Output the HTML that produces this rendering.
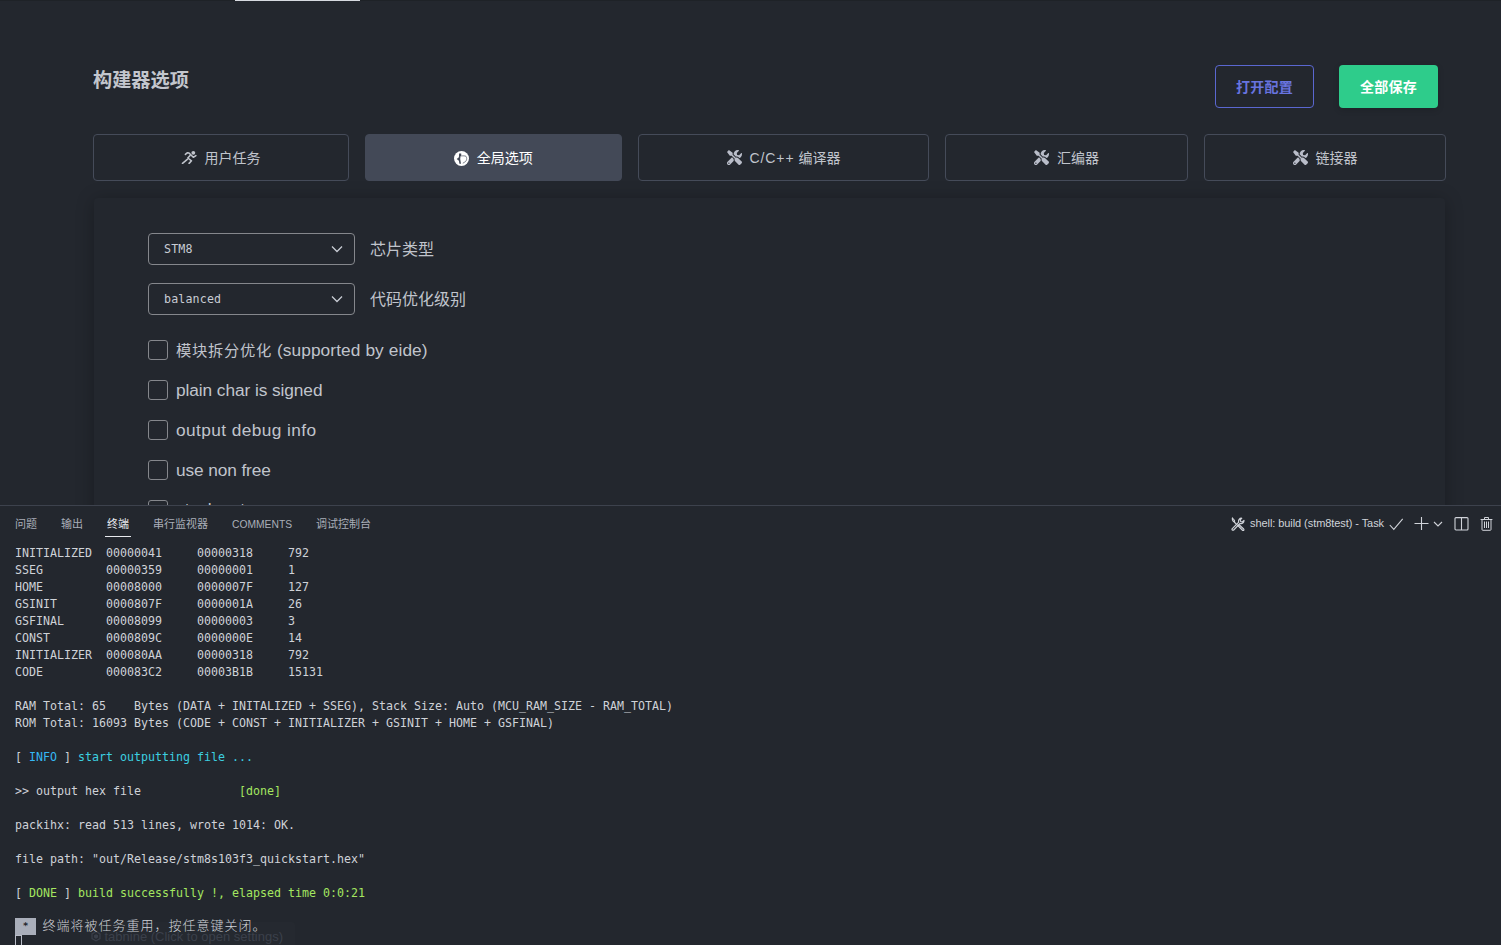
<!DOCTYPE html>
<html lang="zh-CN">
<head>
<meta charset="utf-8">
<title>构建器选项</title>
<style>
*{box-sizing:border-box;margin:0;padding:0}
html,body{width:1501px;height:945px;overflow:hidden;background:#23272e}
body{position:relative;font-family:"Liberation Sans","Noto Sans CJK SC",sans-serif;color:#c0c4cc}
.abs{position:absolute}
#topline{left:0;top:0;width:1501px;height:1px;background:#1e2227}
#topmark{left:235px;top:0;width:125px;height:1px;background:#d7dae0}
#editor{left:0;top:0;width:1501px;height:505px;overflow:hidden}
h1{position:absolute;left:93px;top:68px;font-size:19.2px;line-height:26px;font-weight:700;color:#c3c6cd;white-space:nowrap}
.btn{position:absolute;top:65px;height:43px;width:99px;border-radius:4px;font-size:14px;letter-spacing:.3px;font-weight:700;line-height:43px;text-align:center;white-space:nowrap}
#b-open{left:1215px;border:1px solid #5a67d0;color:#6874e0}
#b-save{left:1339px;background:#2ecc8b;color:#fff;line-height:45px;box-shadow:0 2px 6px rgba(0,0,0,.15)}
.tab{position:absolute;top:134px;height:47px;border:1px solid #454b59;border-radius:4px;font-size:14px;line-height:45px;color:#c0c4cc;white-space:nowrap;display:flex;align-items:center;justify-content:center}
.tab.on{background:#434957;border-color:#434957;color:#fff}
.tab svg{margin-right:8px;flex:none}
.tt{position:relative;top:1px}
#card{left:94px;top:198px;width:1351px;height:330px;background:#23272e;border-radius:4px;box-shadow:0 2px 18px 0 rgba(0,0,0,.27)}
.sel{position:absolute;left:148px;width:207px;height:32px;border:1px solid #85878c;border-radius:4px;font-family:"DejaVu Sans Mono","Liberation Mono",monospace;font-size:11.63px;letter-spacing:.15px;line-height:30px;padding-left:15px;color:#c8ccd4}
.sel svg{position:absolute;right:11px;top:8.500px}
.lab{position:absolute;left:370px;font-size:16px;line-height:34px;color:#c0c4cc;white-space:nowrap}
.cb{position:absolute;left:148px;width:20px;height:20px;border:1px solid #85878c;border-radius:3px}
.cl{position:absolute;left:176px;font-size:17.3px;line-height:24px;color:#c0c4cc;white-space:nowrap}
#panel{left:0;top:505px;width:1501px;height:440px;background:#23272e;border-top:1px solid #3d424d;overflow:hidden}
.pt{position:absolute;top:11px;font-size:11px;line-height:14px;color:#a9aeb8;white-space:nowrap}
.pt.on{color:#e8eaee}
#uline{left:105px;top:30px;width:26px;height:1px;background:#e8eaee}
#term{left:15px;top:39px;font-family:"DejaVu Sans Mono","Liberation Mono","Noto Sans CJK SC",monospace;font-size:11.63px;line-height:17px;color:#cfd2d8;white-space:pre}
.c{color:#3ccfe0}.b{color:#35b8f5}.g{color:#a4e660}
#right{right:0;top:8px;height:20px;font-size:11px;color:#d0d3d9}
#star{left:15px;top:412px;width:21px;height:17px;background:#a9aeba;color:#23272e;font-family:"DejaVu Sans Mono","Liberation Mono",monospace;font-size:9.500px;font-weight:700;line-height:16px;white-space:pre;text-align:center}
#msg{z-index:2;font-weight:300;left:42.500px;top:409.700px;font-family:"Noto Sans CJK SC","Liberation Sans",sans-serif;font-size:13px;letter-spacing:1px;line-height:17px;color:#cfd2d8;white-space:nowrap}
#cursor{left:15px;top:429px;width:7px;height:17px;border:1px solid #b9bdc8}
#tabnine{left:80px;top:416px;width:215px;height:30px;background:#252930;border-radius:3px 3px 0 0;color:#3b404b;font-size:13px;line-height:15px;padding:6.500px 0 0 10.500px;white-space:nowrap;z-index:0}
#tabnine svg{vertical-align:-1px;margin-right:4px}
#tb{left:0;top:0;width:1501px;height:34px}
#tbt{left:1250px;top:10px;letter-spacing:-.07px;font-size:11px;line-height:14px;color:#d0d3d9;white-space:nowrap}
</style>
</head>
<body>
<div id="editor" class="abs">
  <div id="topline" class="abs"></div>
  <div id="topmark" class="abs"></div>
  <h1>构建器选项</h1>
  <div id="b-open" class="btn">打开配置</div>
  <div id="b-save" class="btn">全部保存</div>

  <div class="tab" style="left:93px;width:256px"><svg width="16" height="14" viewBox="0 0 16 14" style="margin-right:7px;position:relative;left:-1px;top:-.7px"><g fill="none" stroke="#c0c4cc" stroke-width="1.55" stroke-linecap="round" stroke-linejoin="round"><circle cx="12.3" cy="2.8" r="1.9" fill="#c0c4cc" stroke="none"/><path d="M4.4 4.400L6.500 2.700L8 3L12.300 7.300L14.900 5.600"/><path d="M9.100 5.400L6.800 8L10.500 10.800L8.100 13.400"/><path d="M6.300 9.300L1.500 13.400"/></g></svg><span class="tt">用户任务</span></div>
  <div class="tab on" style="left:365px;width:257px"><svg width="15" height="15" viewBox="0 0 15 15" style="margin-right:7.5px;position:relative;top:.5px"><circle cx="7.5" cy="7.5" r="7.5" fill="#fff"/><path d="M5.100 2.600L7.200 2.600L7.300 4.600L6.500 5.600L6.200 8L7 12.700L5.400 12.700L4.900 9.800L2.700 7.900L4.900 6.200z" fill="#434957"/><path d="M7.200 5C9 4.700 11 4.800 12 5.300C12.900 6.500 12.900 8.300 12.200 9.600C11.400 10.900 10 11.800 8.800 12.200" fill="none" stroke="#434957" stroke-width=".8" stroke-opacity=".85"/></svg><span class="tt">全局选项</span></div>
  <div class="tab" style="left:638px;width:291px"><svg class="tool" width="15" height="15" viewBox="0 0 512 512"><path fill="#b9bdc9" d="M501.1 395.7L384 278.6c-23.1-23.1-57.6-27.6-85.4-13.9L192 158.1V96L64 0 0 64l96 128h62.1l106.6 106.6c-13.6 27.800-9.200 62.300 13.900 85.400l117.100 117.100c14.600 14.600 38.200 14.600 52.700 0l52.700-52.700c14.500-14.600 14.500-38.200 0-52.700zM331.700 225c28.300 0 54.900 11 74.900 31l19.400 19.400c15.800-6.900 30.800-16.500 43.800-29.500 37.100-37.100 49.700-89.300 37.900-136.700-2.200-9-13.500-12.100-20.100-5.500l-74.400 74.400-67.900-11.300L334 98.900l74.400-74.400c6.600-6.600 3.400-17.900-5.700-20.200-47.400-11.700-99.600.9-136.600 37.900-28.500 28.500-41.900 66.100-41.200 103.600l82.100 82.100c8.100-1.900 16.500-2.900 24.700-2.900zm-103.900 82l-56.700-56.700L18.700 402.800c-25 25-25 65.500 0 90.500s65.500 25 90.500 0l123.600-123.600c-7.600-19.900-9.900-41.600-5-62.700zM64 472c-13.200 0-24-10.800-24-24 0-13.300 10.700-24 24-24s24 10.700 24 24c0 13.200-10.700 24-24 24z"/></svg><span class="tt"><span style="letter-spacing:.9px">C/C++</span> 编译器</span></div>
  <div class="tab" style="left:945px;width:243px"><svg class="tool" width="15" height="15" viewBox="0 0 512 512"><path fill="#b9bdc9" d="M501.1 395.7L384 278.6c-23.1-23.1-57.6-27.6-85.4-13.9L192 158.1V96L64 0 0 64l96 128h62.1l106.6 106.6c-13.6 27.800-9.200 62.300 13.900 85.400l117.100 117.100c14.600 14.600 38.200 14.600 52.700 0l52.700-52.700c14.500-14.600 14.500-38.200 0-52.700zM331.700 225c28.300 0 54.900 11 74.900 31l19.400 19.400c15.800-6.900 30.800-16.500 43.800-29.500 37.100-37.100 49.700-89.300 37.900-136.700-2.200-9-13.500-12.100-20.100-5.500l-74.400 74.400-67.900-11.300L334 98.900l74.400-74.400c6.600-6.600 3.400-17.900-5.700-20.200-47.400-11.700-99.600.9-136.600 37.900-28.500 28.500-41.900 66.100-41.200 103.600l82.100 82.100c8.100-1.900 16.500-2.900 24.700-2.900zm-103.900 82l-56.700-56.700L18.700 402.800c-25 25-25 65.500 0 90.500s65.500 25 90.500 0l123.600-123.600c-7.600-19.900-9.900-41.600-5-62.700zM64 472c-13.200 0-24-10.800-24-24 0-13.300 10.700-24 24-24s24 10.700 24 24c0 13.200-10.700 24-24 24z"/></svg><span class="tt">汇编器</span></div>
  <div class="tab" style="left:1204px;width:242px"><svg class="tool" width="15" height="15" viewBox="0 0 512 512"><path fill="#b9bdc9" d="M501.1 395.7L384 278.6c-23.1-23.1-57.6-27.6-85.4-13.9L192 158.1V96L64 0 0 64l96 128h62.1l106.6 106.6c-13.6 27.800-9.200 62.300 13.900 85.400l117.100 117.100c14.600 14.600 38.200 14.600 52.700 0l52.700-52.700c14.500-14.600 14.500-38.200 0-52.700zM331.700 225c28.300 0 54.900 11 74.900 31l19.400 19.400c15.800-6.900 30.800-16.500 43.800-29.500 37.100-37.100 49.700-89.300 37.900-136.700-2.200-9-13.500-12.100-20.100-5.500l-74.400 74.400-67.900-11.300L334 98.900l74.400-74.400c6.600-6.600 3.400-17.900-5.700-20.200-47.400-11.700-99.600.9-136.600 37.900-28.500 28.500-41.900 66.100-41.200 103.600l82.100 82.100c8.100-1.900 16.500-2.900 24.700-2.900zm-103.900 82l-56.700-56.700L18.700 402.800c-25 25-25 65.500 0 90.500s65.500 25 90.500 0l123.600-123.600c-7.600-19.900-9.900-41.600-5-62.700zM64 472c-13.200 0-24-10.800-24-24 0-13.300 10.700-24 24-24s24 10.700 24 24c0 13.200-10.700 24-24 24z"/></svg><span class="tt">链接器</span></div>

  <div id="card" class="abs"></div>

  <div class="sel" style="top:233px">STM8<svg width="12" height="12" viewBox="0 0 12 12"><path d="M1 3.500l5 5 5-5" fill="none" stroke="#c8ccd4" stroke-width="1.300"/></svg></div>
  <div class="lab" style="top:233px">芯片类型</div>
  <div class="sel" style="top:283px">balanced<svg width="12" height="12" viewBox="0 0 12 12"><path d="M1 3.500l5 5 5-5" fill="none" stroke="#c8ccd4" stroke-width="1.300"/></svg></div>
  <div class="lab" style="top:283px">代码优化级别</div>

  <div class="cb" style="top:340px"></div><div class="cl" style="top:338px"><span style="font-size:15.300px;letter-spacing:.7px;position:relative;top:.3px">模块拆分优化</span><span style="letter-spacing:.1px"> (supported by eide)</span></div>
  <div class="cb" style="top:380px"></div><div class="cl" style="top:378px;letter-spacing:-.075px">plain char is signed</div>
  <div class="cb" style="top:420px"></div><div class="cl" style="top:418px;letter-spacing:.41px">output debug info</div>
  <div class="cb" style="top:460px"></div><div class="cl" style="top:458px;letter-spacing:-.11px">use non free</div>
  <div class="cb" style="top:500px"></div><div class="cl" style="top:497px">stack auto</div>
</div>



<div id="panel" class="abs">
  <div class="pt" style="left:15px">问题</div>
  <div class="pt" style="left:61px">输出</div>
  <div class="pt on" style="left:107px">终端</div>
  <div class="pt" style="left:153px">串行监视器</div>
  <div class="pt" style="left:232px;font-size:10.3px;top:11.500px">COMMENTS</div>
  <div class="pt" style="left:316px">调试控制台</div>
  <div id="uline" class="abs"></div>
  <div id="star" class="abs"> * </div>
  <div id="msg" class="abs">终端将被任务重用，按任意键关闭。</div>
  <div id="cursor" class="abs"></div>
  <div id="tabnine" class="abs"><svg width="10" height="11" viewBox="0 0 10 11"><path d="M5 .6l4 2.300v4.700l-4 2.300-4-2.300V2.900z" fill="none" stroke="#3a3f4a" stroke-width="1.200"/><path d="M5 3.200l2 1.100v2.300L5 7.800 3 6.600V4.300z" fill="#3a3f4a"/></svg>tabnine (Click to open settings)</div>
  <div id="tb" class="abs">
    <svg class="abs" style="left:1230.500px;top:11px" width="14" height="14" viewBox="0 0 15 15"><g fill="none" stroke="#d0d3d9" stroke-width="1.250" stroke-linejoin="round" stroke-linecap="round"><path d="M1.500 1.200c.9.700 1.900 1.800 2.400 3.100l-.7.800L7.300 9.200"/><path d="M1.500 1.200c-.3 1.200.2 2.700 1.100 3.600"/><path d="M8.700 8.300l4.900 4.600a.9.900 0 0 1-1.300 1.300L7.600 9.400z"/><path d="M13.900 3.600a3.100 3.100 0 0 1-4.200 3.200L2.900 13.900a1 1 0 0 1-1.500-1.500L8.300 5.500A3.100 3.100 0 0 1 11.600 1.300L9.900 3.100l.4 1.700 1.700.4z"/></g></svg>
    <div class="abs" id="tbt">shell: build (stm8test) - Task</div>
    <svg class="abs" style="left:1388px;top:11px" width="16" height="14" viewBox="0 0 16 14"><path d="M1.800 8L5.800 12.300L14.700 1.800" fill="none" stroke="#d0d3d9" stroke-width="1.100"/></svg>
    <svg class="abs" style="left:1414px;top:10px" width="15" height="15" viewBox="0 0 15 15"><path d="M7.500 .9V14.100M.5 7.500H14.500" fill="none" stroke="#d0d3d9" stroke-width="1.100"/></svg>
    <svg class="abs" style="left:1433px;top:15px" width="10" height="6" viewBox="0 0 10 6"><path d="M1 1L5 5L9 1" fill="none" stroke="#d0d3d9" stroke-width="1.100"/></svg>
    <svg class="abs" style="left:1454px;top:11px" width="15" height="14" viewBox="0 0 15 14"><rect x="1" y=".6" width="13" height="12.400" rx="1" fill="none" stroke="#d0d3d9" stroke-width="1.100"/><path d="M7.500 .6V13" stroke="#d0d3d9" stroke-width="1.100"/></svg>
    <svg class="abs" style="left:1480px;top:10px" width="13" height="15" viewBox="0 0 13 15"><g fill="none" stroke="#d0d3d9" stroke-width="1"><path d="M.6 3.500H12.400"/><path d="M4.500 3.500V1.500h4V3.500"/><path d="M2 3.500V13.500a.8.800 0 0 0 .8.800H10.200a.8.800 0 0 0 .8-.8V3.500"/><path d="M4.500 5.500V12M6.500 5.500V12M8.500 5.500V12"/></g></svg>
  </div>
  <div id="term" class="abs">INITIALIZED  00000041     00000318     792
SSEG         00000359     00000001     1
HOME         00008000     0000007F     127
GSINIT       0000807F     0000001A     26
GSFINAL      00008099     00000003     3
CONST        0000809C     0000000E     14
INITIALIZER  000080AA     00000318     792
CODE         000083C2     00003B1B     15131

RAM Total: 65    Bytes (DATA + INITALIZED + SSEG), Stack Size: Auto (MCU_RAM_SIZE - RAM_TOTAL)
ROM Total: 16093 Bytes (CODE + CONST + INITIALIZER + GSINIT + HOME + GSFINAL)

[ <span class="b">INFO</span> ] <span class="c">start outputting file ...</span>

&gt;&gt; output hex file              <span class="g">[done]</span>

packihx: read 513 lines, wrote 1014: OK.

file path: "out/Release/stm8s103f3_quickstart.hex"

[ <span class="g">DONE</span> ] <span class="g">build successfully !, elapsed time 0:0:21</span>
</div>
</div>
</body>
</html>
